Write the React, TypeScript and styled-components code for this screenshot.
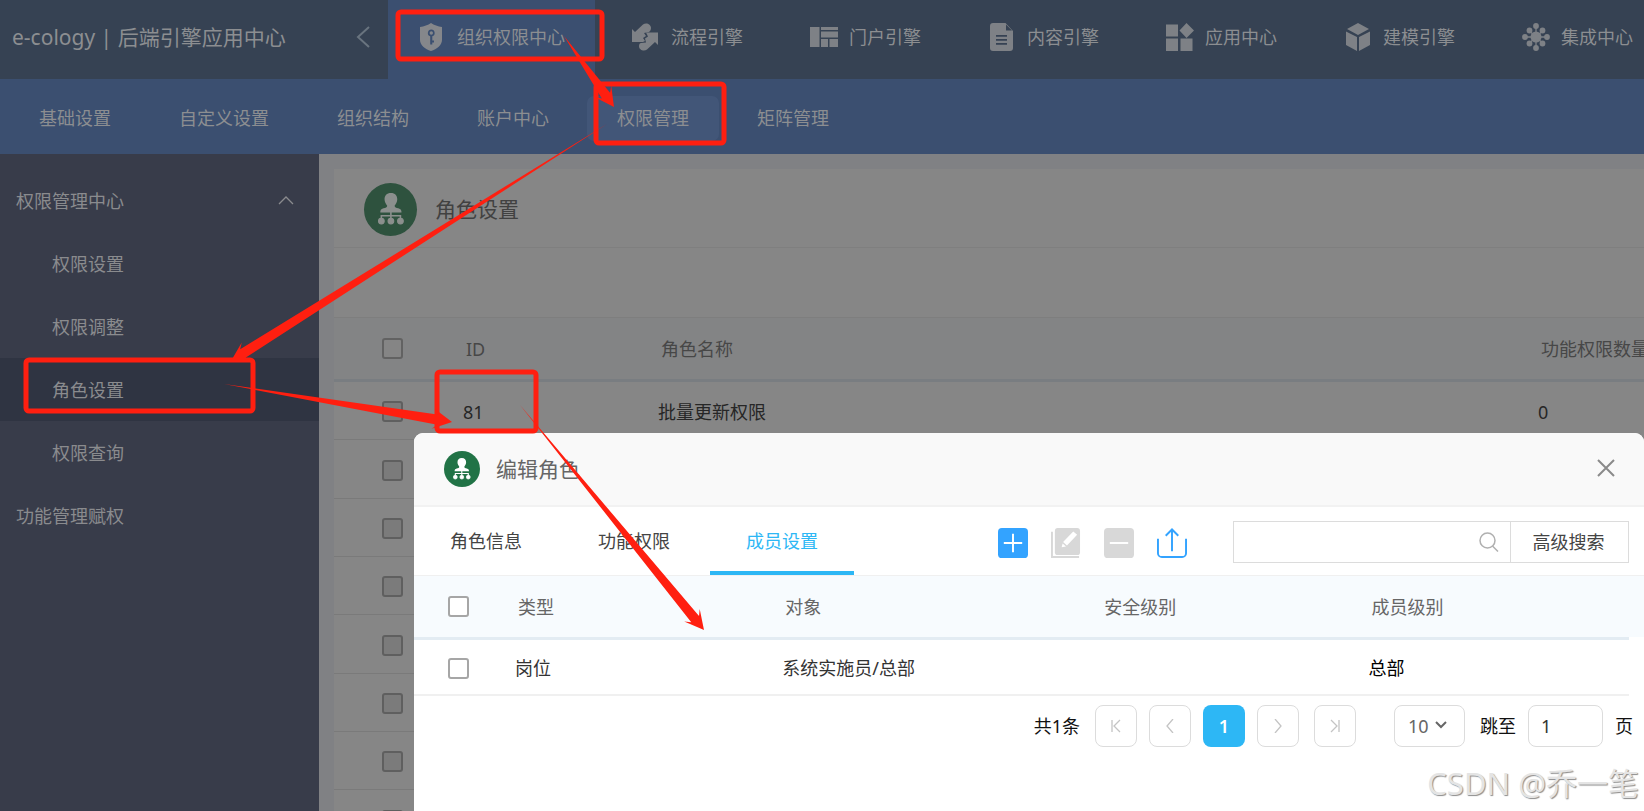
import React from "react";
import styled, { createGlobalStyle } from "styled-components";

const red = "#ff1f10";

const GlobalStyle = createGlobalStyle`
  *, *::before, *::after { box-sizing: border-box; }
  body {
    margin: 0;
    overflow: hidden;
    font-family: "Noto Sans", "Noto Sans CJK SC", sans-serif;
    font-size: 18px;
    line-height: 24px;
  }
  button, input, select { font: inherit; }
  a { text-decoration: none; color: inherit; }
`;

const Page = styled.div`
  position: relative;
  display: flex;
  flex-direction: column;
  height: 100vh;
  overflow: hidden;
  background: #808184;
`;

const TopBar = styled.header`
  display: flex;
  flex: none;
  height: 79px;
  background: #364253;
  color: #8c8e91;
  white-space: nowrap;
`;

const Brand = styled.div`
  display: flex;
  flex: none;
  align-items: center;
  justify-content: space-between;
  width: 388px;
  padding: 0 17px 6px 12px;
  font-size: 21px;
`;

const PlainButton = styled.button`
  display: flex;
  align-items: center;
  justify-content: center;
  padding: 0;
  border: 0;
  background: none;
  color: inherit;
`;

const Modules = styled.nav`
  display: flex;
  gap: 7px;
`;

const ModuleLink = styled.a<{ $active?: boolean }>`
  display: flex;
  flex: none;
  align-items: center;
  gap: 11px;
  padding: 0 30px 6px;
  background: ${(p) => (p.$active ? "#3b4f70" : "transparent")};
  svg { width: 28px; height: 28px; fill: #7e8186; }
`;

const SubNav = styled.nav`
  display: flex;
  flex: none;
  align-items: center;
  gap: 8px;
  height: 75px;
  padding: 3px 9px 0;
  background: #3b4f70;
  color: #8c8e91;
`;

const SubLink = styled.a<{ $active?: boolean }>`
  padding: 10px 30px 11px;
  border-radius: 7px;
  background: ${(p) => (p.$active ? "#425678" : "transparent")};
  white-space: nowrap;
`;

const Body = styled.div`
  display: flex;
  flex: 1;
  min-height: 0;
`;

const Sidebar = styled.aside`
  flex: none;
  width: 319px;
  padding-top: 15px;
  background: #383c4a;
  color: #8a8b8e;
`;

const SideLink = styled.a<{ $child?: boolean; $active?: boolean }>`
  display: flex;
  align-items: center;
  justify-content: space-between;
  height: 63px;
  padding: 0 25px 0 ${(p) => (p.$child ? 52 : 16)}px;
  background: ${(p) => (p.$active ? "#2f3442" : "transparent")};
`;

const Content = styled.main`
  flex: 1;
  min-width: 0;
  margin: 15px 0 0 15px;
  overflow: hidden;
  background: #868686;
`;

const ContentHead = styled.div`
  display: flex;
  align-items: center;
  gap: 18px;
  height: 79px;
  padding: 2px 30px 0;
  border-bottom: 1px solid #7f7f7f;
  color: #414141;
`;

const Title = styled.h1`
  margin: 0;
  font-size: 21px;
  font-weight: 400;
`;

const Badge = styled.span<{ $size: number; $color: string; $ink: string }>`
  display: flex;
  flex: none;
  align-items: center;
  justify-content: center;
  width: ${(p) => p.$size}px;
  height: ${(p) => p.$size}px;
  border-radius: 50%;
  background: ${(p) => p.$color};
  svg { width: 60%; height: 60%; fill: ${(p) => p.$ink}; stroke: ${(p) => p.$ink}; }
`;

const ToolStrip = styled.div`
  height: 69px;
`;

const Table = styled.table`
  width: 100%;
  border-collapse: separate;
  border-spacing: 0;
  table-layout: fixed;
  th, td {
    padding: 0;
    text-align: left;
    font-weight: 400;
    white-space: nowrap;
  }
`;

const RoleTable = styled(Table)`
  th {
    height: 65px;
    padding-left: 3px;
    border-top: 1px solid #7e7e7e;
    border-bottom: 3px solid #797d81;
    background: #838485;
    color: #474747;
  }
  td {
    height: 58px;
    padding-top: 2px;
    border-bottom: 1px solid #7a7a7a;
    color: #262626;
  }
  tbody tr:nth-child(3n + 2) td { height: 59px; }
  th:first-child, td:first-child { padding-left: 48px; }
`;

const Check = styled.input<{ $edge: string; $fill: string }>`
  display: block;
  width: 21px;
  height: 21px;
  margin: 0;
  appearance: none;
  border: 2px solid ${(p) => p.$edge};
  border-radius: 3px;
  background: ${(p) => p.$fill};
`;

const Dialog = styled.section`
  position: absolute;
  top: 433px;
  right: 0;
  bottom: 0;
  left: 414px;
  overflow: hidden;
  border-radius: 9px 9px 0 0;
  background: #fff;
`;

const DialogHead = styled.header`
  display: flex;
  align-items: center;
  gap: 16px;
  height: 74px;
  padding: 0 29px 0 30px;
  border-bottom: 2px solid #f2f2f2;
  background: #f9f9f9;
  color: #666;
  button { margin-left: auto; padding-bottom: 2px; }
`;

const DialogBar = styled.div`
  display: flex;
  align-items: center;
  height: 69px;
  padding-right: 15px;
  border-bottom: 1px solid #f0f0f0;
`;

const Tabs = styled.div`
  display: flex;
  align-self: stretch;
  gap: 4px;
  margin-right: auto;
`;

const Tab = styled.button<{ $active?: boolean }>`
  width: 144px;
  padding: 3px 0 0;
  border: 0;
  border-bottom: 4px solid ${(p) => (p.$active ? "#2db7f5" : "transparent")};
  background: none;
  color: ${(p) => (p.$active ? "#2db7f5" : "#444")};
`;

const Tools = styled.div`
  display: flex;
  gap: 23px;
  margin: 4px 46px 0 0;
  svg { display: block; width: 30px; height: 30px; }
`;

const SearchBox = styled.div`
  display: flex;
  align-items: center;
  width: 396px;
  height: 42px;
  margin-top: 1px;
  border: 1px solid #dcdcdc;
  color: #444;
  input {
    flex: 1;
    min-width: 0;
    border: 0;
    outline: 0;
    padding: 0 12px;
  }
`;

const AdvancedButton = styled.button`
  align-self: stretch;
  width: 118px;
  margin-left: 11px;
  padding: 0 2px 0 0;
  border: 0;
  border-left: 1px solid #dcdcdc;
  background: none;
  color: #444;
`;

const TableArea = styled.div`
  padding-right: 15px;
  background: linear-gradient(#f7fbfe 61px, #fff 61px);
`;

const MemberTable = styled(Table)`
  th {
    height: 64px;
    padding-left: 3px;
    border-bottom: 3px solid #e3ecf3;
    color: #666;
  }
  td {
    height: 56px;
    padding-top: 2px;
    border-bottom: 2px solid #f0f0f0;
    background: #fff;
    color: #333;
  }
  td:last-child { color: #000; }
  th:first-child, td:first-child { padding-left: 34px; }
`;

const Pager = styled.nav`
  display: flex;
  align-items: center;
  justify-content: flex-end;
  gap: 12px;
  margin-top: 9px;
  padding-right: 11px;
  color: #111;
`;

const PageButton = styled.button<{ $current?: boolean }>`
  display: flex;
  align-items: center;
  justify-content: center;
  width: 42px;
  height: 42px;
  padding: 0;
  border: ${(p) => (p.$current ? "0" : "1px solid #dcdcdc")};
  border-radius: 8px;
  background: ${(p) => (p.$current ? "#2db7f5" : "#fff")};
  color: ${(p) => (p.$current ? "#fff" : "#c4c4c4")};
  font-weight: 600;
`;

const LastButton = styled(PageButton)`
  margin-left: 3px;
`;

const SizePicker = styled.label`
  position: relative;
  margin: 0 3px 0 26px;
  color: #666;
  select {
    display: block;
    width: 71px;
    height: 42px;
    padding: 0 0 0 13px;
    appearance: none;
    border: 1px solid #dcdcdc;
    border-radius: 8px;
    background: #fff;
    color: inherit;
  }
  svg {
    position: absolute;
    top: 15px;
    right: 18px;
    pointer-events: none;
  }
`;

const JumpInput = styled.input`
  width: 75px;
  height: 42px;
  padding: 0 12px;
  border: 1px solid #dcdcdc;
  border-radius: 8px;
  color: #333;
`;

const Total = styled.span`
  margin-right: 3px;
`;

const Watermark = styled.div`
  position: absolute;
  right: 5px;
  bottom: 5px;
  font-size: 31px;
  line-height: 46px;
  color: #e4e4e4;
  text-shadow: 1px 1px 1px #8c8c8c;
  white-space: nowrap;
`;

const Marks = styled.svg`
  position: absolute;
  top: 0;
  left: 0;
  pointer-events: none;
`;

const ShieldIcon = () => (
  <svg viewBox="0 0 28 28">
    <path fillRule="evenodd" fill="#85878b" d="M13 0C16 2 20 3.500 24 4V17C24 22 19 26 13 28 7 26 2 22 2 17V4C6 3.500 10 2 13 0ZM13.300 6.500A3.500 3.500 0 0 0 12.200 13.300V21.500H14.300V19.500H16V17.500H14.300V13.300A3.500 3.500 0 0 0 13.300 6.500ZM13.300 8.300A1.700 1.700 0 1 1 13.300 11.700 1.700 1.700 0 0 1 13.300 8.300Z" />
  </svg>
);
const FlowIcon = () => (
  <svg viewBox="0 0 28 28">
    <path d="M0 6 3 9 11 1.500C14 -1 19 1 19 5 19 7 18 8 17 9L12 10 14 13 11 15 13 18 11 19H0Z" />
    <path d="M26 22 23 19 15 26.500C12 29 7 27 7 23 7 21 8 20 9 20L14 19.500 13 15.500 16 13.500 14 9.500H26Z" />
  </svg>
);
const PortalIcon = () => (
  <svg viewBox="0 0 28 28">
    <path d="M0 4H9.500V24H0ZM11 4H28V7H11ZM11 8.500H28V14.500H11ZM11 16H18V24H11ZM19.500 16H28V24H19.500Z" />
  </svg>
);
const DocIcon = () => (
  <svg viewBox="0 0 28 28">
    <path fillRule="evenodd" d="M5 0H17.500L25 8V25A3 3 0 0 1 22 28H5A3 3 0 0 1 2 25V3A3 3 0 0 1 5 0ZM18 1.500V7.500H24ZM8 12V13.800H19V12ZM8 16V17.800H19V16ZM8 20V21.800H19V20Z" />
  </svg>
);
const AppsIcon = () => (
  <svg viewBox="0 0 28 28">
    <path d="M0 1.500H12V13.500H0ZM20.500 0 28 7.500 20.500 15 13.500 7.500ZM0 15.500H12V28H0ZM14.500 15.500H26.500V28H14.500Z" />
  </svg>
);
const CubeIcon = () => (
  <svg viewBox="0 0 28 28">
    <path d="M14 0 25 6 14 12 3 6ZM2 8.500 13 14V28L2 22ZM26 8.500 15 14V28L26 22Z" />
  </svg>
);
const HubIcon = () => (
  <svg viewBox="0 0 28 28">
    <circle cx="14" cy="14" r="5.500" />
    <path d="M14 3V25M3 14H25M7 7.500 21 20.500M21 7.500 7 20.500" stroke="#7e8186" strokeWidth="1.300" />
    {[[14, 3], [14, 25], [3, 14], [25, 14], [7.5, 7.5], [20.5, 7.5], [7.5, 20.5], [20.5, 20.5]].map(([x, y]) => (
      <circle key={`${x}-${y}`} cx={x} cy={y} r="2.900" />
    ))}
  </svg>
);

const RoleIcon = () => (
  <svg viewBox="0 0 30 30">
    <path stroke="none" d="M15 0C19 0 21 2.500 21 6 21 9 19.500 10.500 18.500 12 18.500 13.500 20 14 22 14.500 24.500 15.200 25 16.500 25 18.500H5C5 16.500 5.500 15.200 8 14.500 10 14 11.500 13.500 11.500 12 10.500 10.500 9 9 9 6 9 2.500 11 0 15 0Z" />
    <path fill="none" strokeWidth="1.500" d="M6 25V21.500H24V25M15 18V26" />
    <circle cx="6" cy="26.500" r="2.700" />
    <circle cx="15" cy="26.500" r="2.700" />
    <circle cx="24" cy="26.500" r="2.700" />
  </svg>
);

const modules: [string, () => React.ReactElement][] = [
  ["组织权限中心", ShieldIcon],
  ["流程引擎", FlowIcon],
  ["门户引擎", PortalIcon],
  ["内容引擎", DocIcon],
  ["应用中心", AppsIcon],
  ["建模引擎", CubeIcon],
  ["集成中心", HubIcon],
];

const subItems = ["基础设置", "自定义设置", "组织结构", "账户中心", "权限管理", "矩阵管理"];
const sideChildren = ["权限设置", "权限调整", "角色设置", "权限查询"];

const roles = [{ id: "81", name: "批量更新权限", count: "0" }, ...Array.from({ length: 7 }, () => ({ id: "", name: "", count: "" }))];

type Point = [number, number];

// Builds a tapered arrow: a sharp tail at `from`, barbed head at `to`.
const arrowPoints = (from: Point, to: Point) => {
  const dx = to[0] - from[0];
  const dy = to[1] - from[1];
  const len = Math.hypot(dx, dy);
  const at = (back: number, side: number) =>
    `${to[0] - (dx * back + dy * side) / len},${to[1] - (dy * back - dx * side) / len}`;
  return [from.join(","), at(14, 5), at(19, 10), at(0, 0), at(19, -10), at(14, -5)].join(" ");
};

const arrows: [Point, Point][] = [
  [[564, 36], [614, 107]],
  [[607, 124], [231, 361]],
  [[224, 384], [452, 422]],
  [[520, 405], [704, 630]],
];
const frames = [
  { x: 398, y: 12, width: 204, height: 47 },
  { x: 596, y: 84, width: 128, height: 59 },
  { x: 26, y: 360, width: 227, height: 51 },
  { x: 437, y: 372, width: 99, height: 59 },
];

const Chevron = ({ d, w = 10, h = 14 }: { d: string; w?: number; h?: number }) => (
  <svg width={w} height={h} viewBox={`0 0 ${w} ${h}`} fill="none" stroke="currentColor" strokeWidth="1.300">
    <path d={d} />
  </svg>
);

export default function App() {
  return (
    <Page>
      <GlobalStyle />
      <TopBar>
        <Brand>
          <span>e-cology | 后端引擎应用中心</span>
          <PlainButton aria-label="返回">
            <svg width="16" height="24" viewBox="0 0 16 24" fill="none" stroke="#69747f" strokeWidth="2">
              <path d="M14 2 3 12 14 22" />
            </svg>
          </PlainButton>
        </Brand>
        <Modules>
          {modules.map(([name, Icon], i) => (
            <ModuleLink href="#" key={name} $active={i === 0}>
              <Icon />
              {name}
            </ModuleLink>
          ))}
        </Modules>
      </TopBar>
      <SubNav>
        {subItems.map((name) => (
          <SubLink href="#" key={name} $active={name === "权限管理"}>{name}</SubLink>
        ))}
      </SubNav>
      <Body>
        <Sidebar>
          <SideLink href="#">
            权限管理中心
            <Chevron d="M1 8 8 1 15 8" w={16} h={9} />
          </SideLink>
          {sideChildren.map((name) => (
            <SideLink href="#" key={name} $child $active={name === "角色设置"}>{name}</SideLink>
          ))}
          <SideLink href="#">功能管理赋权</SideLink>
        </Sidebar>
        <Content>
          <ContentHead>
            <Badge $size={53} $color="#2e523e" $ink="#8b8f8d"><RoleIcon /></Badge>
            <Title>角色设置</Title>
          </ContentHead>
          <ToolStrip />
          <RoleTable>
            <colgroup>
              <col style={{ width: 129 }} />
              <col style={{ width: 195 }} />
              <col />
              <col style={{ width: 106 }} />
            </colgroup>
            <thead>
              <tr>
                <th><Check type="checkbox" aria-label="全选角色" $edge="#626262" $fill="#858585" /></th>
                <th>ID</th>
                <th>角色名称</th>
                <th>功能权限数量</th>
              </tr>
            </thead>
            <tbody>
              {roles.map((role, i) => (
                <tr key={i}>
                  <td><Check type="checkbox" disabled aria-label={`选择角色 ${i + 1}`} $edge="#5f5f5f" $fill="#7b7b7b" /></td>
                  <td>{role.id}</td>
                  <td>{role.name}</td>
                  <td>{role.count}</td>
                </tr>
              ))}
            </tbody>
          </RoleTable>
        </Content>
      </Body>

      <Dialog role="dialog" aria-label="编辑角色">
        <DialogHead>
          <Badge $size={36} $color="#217346" $ink="#fff"><RoleIcon /></Badge>
          <Title as="h2">编辑角色</Title>
          <PlainButton aria-label="关闭">
            <svg width="18" height="18" viewBox="0 0 18 18" stroke="#8a8a8a" strokeWidth="2">
              <path d="M1 1 17 17M17 1 1 17" />
            </svg>
          </PlainButton>
        </DialogHead>
        <DialogBar>
          <Tabs>
            <Tab>角色信息</Tab>
            <Tab>功能权限</Tab>
            <Tab $active>成员设置</Tab>
          </Tabs>
          <Tools>
            <PlainButton aria-label="添加">
              <svg viewBox="0 0 31 31">
                <rect width="31" height="31" rx="4" fill="#33a3ff" />
                <path d="M6 15.500H25M15.500 6V25" stroke="#fff" strokeWidth="2" />
              </svg>
            </PlainButton>
            <PlainButton aria-label="编辑">
              <svg viewBox="0 0 31 31">
                <rect x="4" width="26" height="28" rx="3" fill="#d8d8d8" />
                <path d="M1 4V30H29" fill="none" stroke="#d8d8d8" strokeWidth="2" />
                <path d="M23 3.500 27 7 16.500 18 12.500 14.500ZM12 16 15.500 19 11 20Z" fill="#fff" />
              </svg>
            </PlainButton>
            <PlainButton aria-label="删除">
              <svg viewBox="0 0 31 31">
                <rect width="31" height="31" rx="4" fill="#d8d8d8" />
                <path d="M6 15.500H25" stroke="#fff" strokeWidth="2" />
              </svg>
            </PlainButton>
            <PlainButton aria-label="导出">
              <svg viewBox="0 0 31 31" fill="none" stroke="#33a3ff" strokeWidth="2">
                <path d="M1 11V26A4 4 0 0 0 5 30H26A4 4 0 0 0 30 26V11M15.500 24V2M9 8 15.500 1.500 22 8" />
              </svg>
            </PlainButton>
          </Tools>
          <SearchBox>
            <input type="text" aria-label="搜索" />
            <PlainButton aria-label="查找">
              <svg width="20" height="20" viewBox="0 0 20 20" fill="none" stroke="#b0b0b0" strokeWidth="1.500">
                <circle cx="8.500" cy="8.500" r="7.500" />
                <path d="M13.500 14 19 19.500" />
              </svg>
            </PlainButton>
            <AdvancedButton>高级搜索</AdvancedButton>
          </SearchBox>
        </DialogBar>
        <TableArea>
          <MemberTable>
            <colgroup>
              <col style={{ width: 101 }} />
              <col style={{ width: "22%" }} />
              <col style={{ width: 319 }} />
              <col style={{ width: "22%" }} />
              <col />
            </colgroup>
            <thead>
              <tr>
                <th><Check type="checkbox" aria-label="全选成员" $edge="#a6a6a6" $fill="#fff" /></th>
                <th>类型</th>
                <th>对象</th>
                <th>安全级别</th>
                <th>成员级别</th>
              </tr>
            </thead>
            <tbody>
              <tr>
                <td><Check type="checkbox" aria-label="选择岗位" $edge="#a6a6a6" $fill="#fff" /></td>
                <td>岗位</td>
                <td>系统实施员/总部</td>
                <td />
                <td>总部</td>
              </tr>
            </tbody>
          </MemberTable>
        </TableArea>
        <Pager aria-label="分页">
          <Total>共1条</Total>
          <PageButton aria-label="首页"><Chevron d="M1 1V13M9 1 3 7 9 13" /></PageButton>
          <PageButton aria-label="上一页"><Chevron d="M8 0 2 7 8 14" /></PageButton>
          <PageButton $current>1</PageButton>
          <PageButton aria-label="下一页"><Chevron d="M2 0 8 7 2 14" /></PageButton>
          <LastButton aria-label="末页"><Chevron d="M9 1V13M1 1 7 7 1 13" /></LastButton>
          <SizePicker>
            <select aria-label="每页条数" defaultValue="10"><option>10</option><option>20</option></select>
            <svg width="12" height="10" viewBox="0 0 12 10" fill="none" stroke="#666" strokeWidth="2">
              <path d="M1 2 6 7 11 2" />
            </svg>
          </SizePicker>
          <label htmlFor="jump">跳至</label>
          <JumpInput id="jump" type="text" defaultValue="1" />
          <span>页</span>
        </Pager>
      </Dialog>

      <Watermark>CSDN @乔一笔</Watermark>
      <Marks width="760" height="680">
        {frames.map((f) => (
          <rect key={f.x} {...f} rx="3" fill="none" stroke={red} strokeWidth="5" />
        ))}
        {arrows.map(([from, to]) => (
          <polygon key={from[0]} points={arrowPoints(from, to)} fill={red} />
        ))}
      </Marks>
    </Page>
  );
}
